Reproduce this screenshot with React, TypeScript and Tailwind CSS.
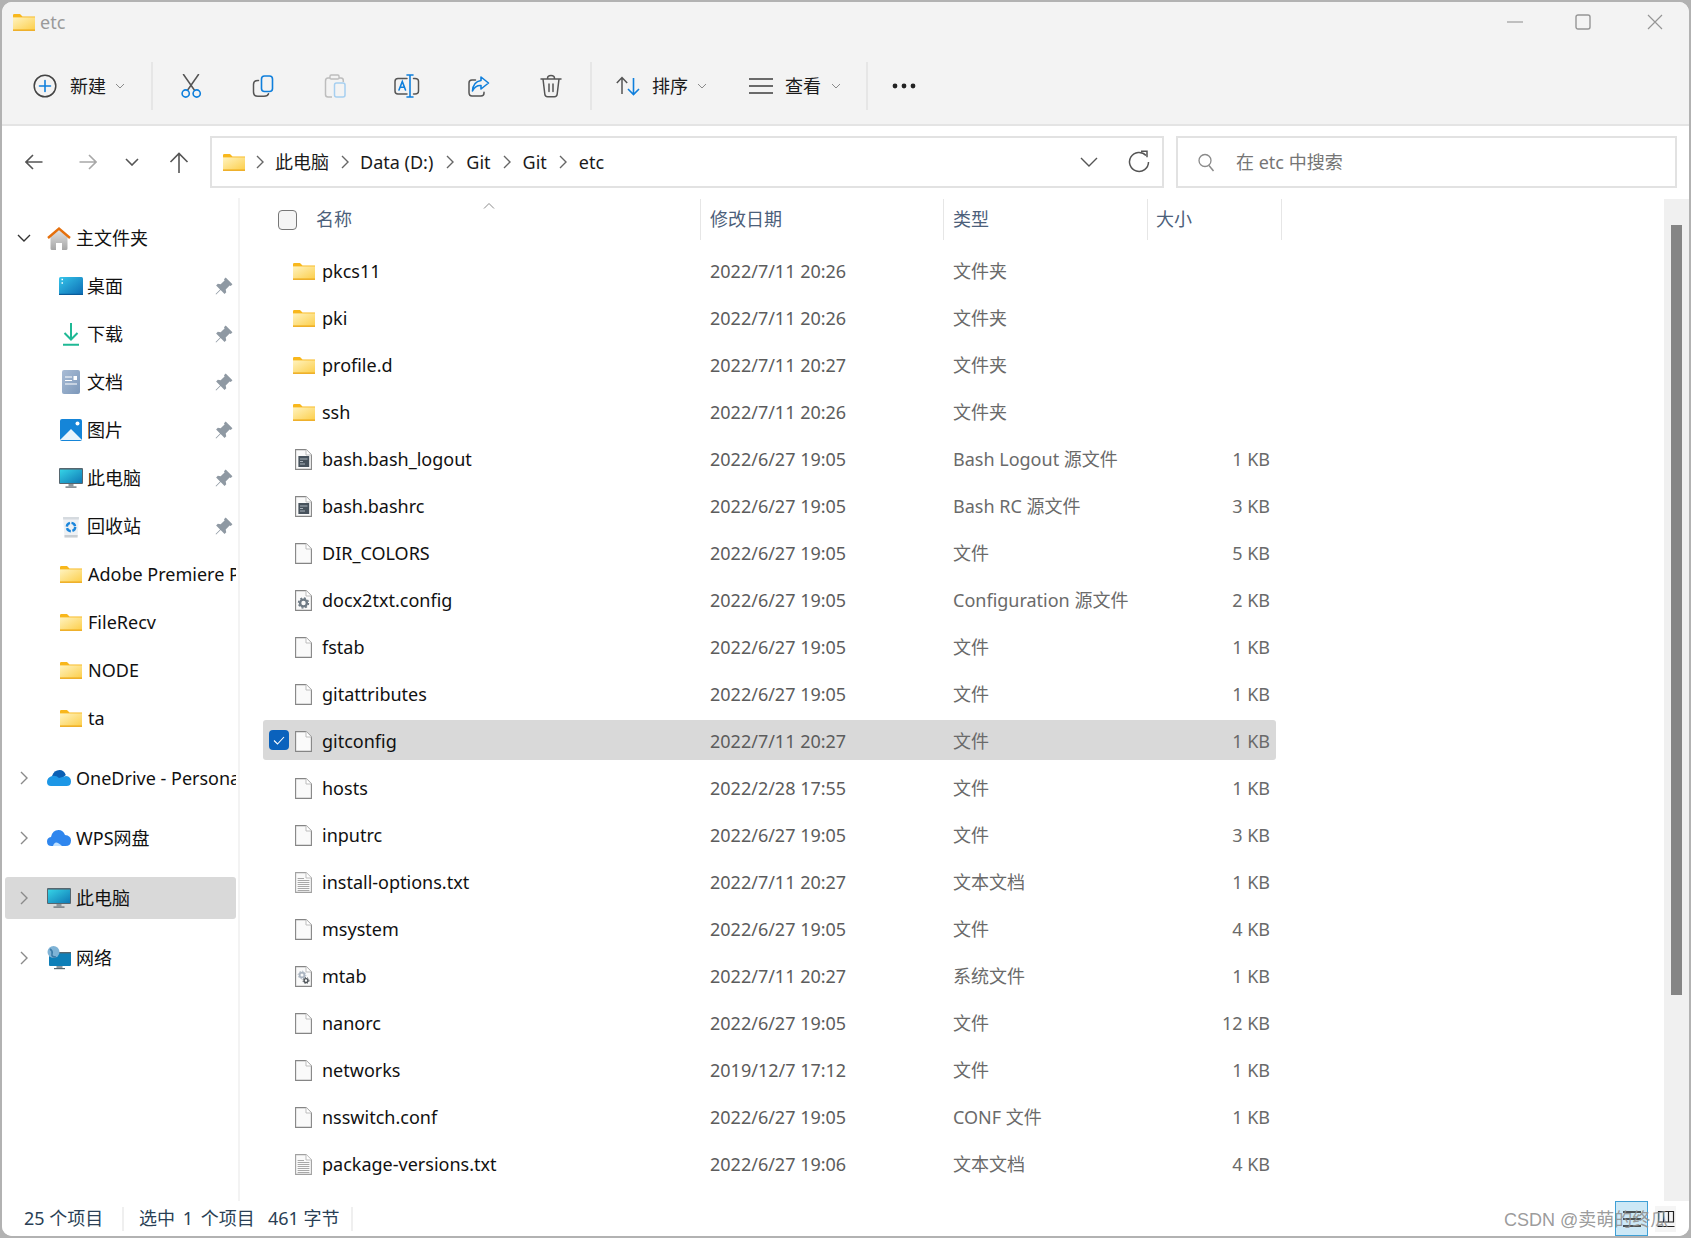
const gray = "#555555";
const blue = "#0f7fdc";

function Folder({ className = "" }: { className?: string }) {
  return (
    <svg width="22" height="17" viewBox="0 0 22 17" className={`shrink-0 ${className}`}>
      <defs>
        <linearGradient id="folderBody" x1="0" y1="0" x2="1" y2="1">
          <stop offset="0" stopColor="#fff3bf" />
          <stop offset="1" stopColor="#fccf4d" />
        </linearGradient>
      </defs>
      <path d="M0 1.2Q0 0 1.2 0H7L9.5 2.5H22V17H0Z" fill="#f8b71c" />
      <rect x="0" y="3.4" width="22" height="12.2" fill="url(#folderBody)" />
      <rect x="0" y="15.6" width="22" height="1.4" fill="#eeb02c" />
    </svg>
  );
}

type FileKind = "plain" | "bash" | "config" | "text" | "sys";

function FileIcon({ kind = "plain" }: { kind?: FileKind }) {
  return (
    <svg width="17" height="21" viewBox="0 0 17 21" className="shrink-0 ml-[2px] mr-[3px]">
      <path d="M.6.6H11L16.4 6V20.4H.6Z" fill="#fafafa" stroke={kind === "text" ? "#a0a0a0" : "#858585"} strokeWidth="1.1" />
      <path d="M11 .6V6H16.4" fill="#fff" stroke="#bdbdbd" strokeWidth="1" />
      {kind === "bash" && (
        <>
          <rect x="3.4" y="7" width="10.8" height="11" fill="#47525c" />
          <path d="M5 10H12.5M5 12.5H8M5 15H10" stroke="#a9b2ba" strokeWidth="1" />
        </>
      )}
      {kind === "config" && (
        <>
          <circle cx="8.5" cy="13" r="3.4" fill="none" stroke="#6e7a85" strokeWidth="2.4" />
          <circle cx="8.5" cy="13" r="5" fill="none" stroke="#6e7a85" strokeWidth="1.4" strokeDasharray="2 1.9" />
        </>
      )}
      {kind === "text" && (
        <path d="M2.6 6.5H9M2.6 8.5H14.4M2.6 10.5H14.4M2.6 12.5H14.4M2.6 14.5H14.4M2.6 16.5H14.4M2.6 18.5H14.4" stroke="#a8a8a8" strokeWidth="1" />
      )}
      {kind === "sys" && (
        <>
          <circle cx="7" cy="9" r="2.4" fill="none" stroke="#aab4c0" strokeWidth="1.8" />
          <circle cx="7" cy="9" r="3.8" fill="none" stroke="#aab4c0" strokeWidth="1" strokeDasharray="1.5 1.4" />
          <circle cx="11" cy="14.5" r="1.9" fill="none" stroke="#4d5358" strokeWidth="1.4" />
          <circle cx="11" cy="14.5" r="3" fill="none" stroke="#4d5358" strokeWidth="1" strokeDasharray="1.3 1.2" />
        </>
      )}
    </svg>
  );
}

function Chev({ open = false, color = "#8a8a8a" }: { open?: boolean; color?: string }) {
  return open ? (
    <svg width="14" height="8" viewBox="0 0 14 8">
      <path d="M1 1L7 7L13 1" fill="none" stroke="#333" strokeWidth="1.4" />
    </svg>
  ) : (
    <svg width="8" height="14" viewBox="0 0 8 14">
      <path d="M1 1L7 7L1 13" fill="none" stroke={color} strokeWidth="1.4" />
    </svg>
  );
}

function SmallDown() {
  return (
    <svg width="10" height="6" viewBox="0 0 10 6" className="shrink-0">
      <path d="M1 1L5 5L9 1" fill="none" stroke="#8a8a8a" strokeWidth="1" />
    </svg>
  );
}

function Sep() {
  return <div className="h-[48px] w-[2px] shrink-0 bg-[#e6e6e6]" />;
}

function IconSlot({ children }: { children: React.ReactNode }) {
  return <div className="flex h-[26px] w-[72px] shrink-0 items-center justify-center">{children}</div>;
}

function Toolbar() {
  const line = { fill: "none", stroke: gray, strokeWidth: 1.5, strokeLinecap: "round" as const };
  const accent = { fill: "none", stroke: blue, strokeWidth: 1.6, strokeLinecap: "round" as const };
  return (
    <div className="flex h-[84px] shrink-0 items-center border-b-2 border-[#e4e4e4] bg-[#f3f3f3] pl-[31px] pt-[6px] text-[18px] text-[#1a1a1a]">
      <svg width="24" height="24" viewBox="0 0 24 24" className="shrink-0">
        <circle cx="12" cy="12" r="10.8" fill="none" stroke="#444" strokeWidth="1.5" />
        <path d="M12 6.5V17.5M6.5 12H17.5" {...accent} />
      </svg>
      <span className="ml-[13px]">新建</span>
      <span className="ml-[9px]"><SmallDown /></span>
      <div className="ml-[26px]"><Sep /></div>
      <div className="ml-[2px] flex">
        <IconSlot>
          <svg width="24" height="24" viewBox="0 0 24 24">
            <path d="M4.5.5L15.5 16.2M19.5.5L8.5 16.2" {...line} />
            <circle cx="6.7" cy="19.5" r="3.6" {...accent} />
            <circle cx="17.7" cy="19.5" r="3.6" {...accent} />
          </svg>
        </IconSlot>
        <IconSlot>
          <svg width="24" height="24" viewBox="0 0 24 24">
            <rect x="10.5" y="2" width="11" height="15.5" rx="3" {...accent} />
            <path d="M7.5 6.5H7Q2.5 6.5 2.5 10.5V18Q2.5 22.3 7 22.3H13Q16.8 22.3 17.5 19.8" {...line} />
          </svg>
        </IconSlot>
        <IconSlot>
          <svg width="24" height="24" viewBox="0 0 24 24">
            <path d="M7 4H5Q2.5 4 2.5 7V20.5Q2.5 23 5 23H9M16 4H18Q20.3 4 20.3 6.5V8" fill="none" stroke="#bdbdbd" strokeWidth="1.5" />
            <rect x="7" y="1" width="9" height="4" rx="1.2" fill="none" stroke="#bdbdbd" strokeWidth="1.4" />
            <rect x="11.5" y="9" width="10.5" height="14" rx="2" fill="none" stroke="#a6cff0" strokeWidth="1.5" />
          </svg>
        </IconSlot>
        <IconSlot>
          <svg width="26" height="24" viewBox="0 0 26 24">
            <path d="M13 4.5H4Q1 4.5 1 7.5V17Q1 20 4 20H13M19.5 4.5H21Q24.5 4.5 24.5 7.5V17Q24.5 20 21 20H19.5" {...line} />
            <path d="M16 1V23M13 1H19M13 23H19" {...accent} />
            <path d="M5 16L8.3 7.5L11.5 16M6.2 13.2H10.4" {...accent} />
          </svg>
        </IconSlot>
        <IconSlot>
          <svg width="24" height="24" viewBox="0 0 24 24">
            <path d="M8.5 6H5Q2 6 2 9V18.5Q2 22 5 22H14Q17 22 17 19V18.2" {...line} />
            <path d="M14 3L21.5 9L14 15V11.5Q8.5 11 5.5 17Q6 7.8 14 6.5Z" fill="none" stroke={blue} strokeWidth="1.6" strokeLinejoin="round" />
          </svg>
        </IconSlot>
        <IconSlot>
          <svg width="22" height="24" viewBox="0 0 22 24">
            <path d="M1 5H21M7.5 4.5Q7.5 1.5 11 1.5Q14.5 1.5 14.5 4.5M3 5L4.8 20Q5 22.8 7.5 22.8H14.5Q17 22.8 17.2 20L19 5M9 10V17.5M13 10V17.5" {...line} />
          </svg>
        </IconSlot>
      </div>
      <div className="ml-[3px]"><Sep /></div>
      <svg width="24" height="20" viewBox="0 0 24 20" className="ml-[24px] shrink-0">
        <path d="M6 18V1.5M.8 7L6 1.5L11.2 7" fill="none" stroke={gray} strokeWidth="1.5" />
        <path d="M17.5 2V18.5M12 13L17.5 18.5L23 13" fill="none" stroke={blue} strokeWidth="1.6" />
      </svg>
      <span className="ml-[12px]">排序</span>
      <span className="ml-[9px]"><SmallDown /></span>
      <svg width="24" height="18" viewBox="0 0 24 18" className="ml-[42px] shrink-0">
        <path d="M0 2H24M0 9H24M0 16H24" stroke="#6a6a6a" strokeWidth="1.8" />
      </svg>
      <span className="ml-[12px]">查看</span>
      <span className="ml-[10px]"><SmallDown /></span>
      <div className="ml-[25px]"><Sep /></div>
      <svg width="24" height="6" viewBox="0 0 24 6" className="ml-[24px] shrink-0">
        <circle cx="3" cy="3" r="2.4" fill="#222" />
        <circle cx="12" cy="3" r="2.4" fill="#222" />
        <circle cx="21" cy="3" r="2.4" fill="#222" />
      </svg>
    </div>
  );
}

const crumbs = [
  { label: "Data (D:)", gap: "w-[31px]" },
  { label: "Git", gap: "w-[33px]" },
  { label: "Git", gap: "w-[32px]" },
  { label: "etc", gap: "w-[32px]" },
];

function AddressRow() {
  return (
    <div className="flex h-[72px] shrink-0 items-start bg-white pt-[10px] text-[18px]">
      <div className="flex h-[52px] w-[208px] shrink-0 items-center">
        <div className="ml-[5px] flex w-[54px] justify-center">
          <svg width="18" height="16" viewBox="0 0 18 16">
            <path d="M1 8H17.5M8 1L1 8L8 15" fill="none" stroke={gray} strokeWidth="1.6" />
          </svg>
        </div>
        <div className="flex w-[54px] justify-center">
          <svg width="18" height="16" viewBox="0 0 18 16">
            <path d="M.5 8H17M10 1L17 8L10 15" fill="none" stroke="#a8a8a8" strokeWidth="1.6" />
          </svg>
        </div>
        <div className="flex w-[34px] justify-center">
          <svg width="14" height="8" viewBox="0 0 14 8">
            <path d="M1 1L7 7L13 1" fill="none" stroke={gray} strokeWidth="1.6" />
          </svg>
        </div>
        <div className="flex w-[60px] justify-center">
          <svg width="20" height="21" viewBox="0 0 20 21">
            <path d="M10 21V2M1.5 10L10 1.5L18.5 10" fill="none" stroke={gray} strokeWidth="1.6" />
          </svg>
        </div>
      </div>
      <div className="flex h-[52px] w-[954px] shrink-0 items-center border-2 border-[#e2e2e2] pl-[11px] pr-[12px] text-[#1a1a1a]">
        <Folder />
        <div className="flex w-[30px] justify-center"><Chev color="#666" /></div>
        <span>此电脑</span>
        {crumbs.map((c, i) => (
          <span key={i} className="flex items-center">
            <span className={`flex ${c.gap} justify-center`}><Chev color="#666" /></span>
            {c.label}
          </span>
        ))}
        <svg width="18" height="10" viewBox="0 0 18 10" className="ml-auto mr-[30px]">
          <path d="M1 1L9 9L17 1" fill="none" stroke={gray} strokeWidth="1.4" />
        </svg>
        <svg width="22" height="24" viewBox="0 0 22 24">
          <path d="M18 5.5A9.5 9.5 0 1 0 20.5 12" fill="none" stroke={gray} strokeWidth="1.5" />
          <path d="M13 1.2H19V7.2" fill="none" stroke={gray} strokeWidth="1.5" />
        </svg>
      </div>
      <div className="ml-[12px] flex h-[52px] w-[501px] shrink-0 items-center border-2 border-[#e2e2e2] pl-[19px] text-[#757575]">
        <svg width="18" height="19" viewBox="0 0 18 19" className="shrink-0">
          <circle cx="8" cy="7.5" r="6" fill="none" stroke="#8a8a8a" strokeWidth="1.3" />
          <path d="M12 12.5L16.5 18" stroke="#8a8a8a" strokeWidth="1.5" />
        </svg>
        <span className="ml-[21px]">在 etc 中搜索</span>
      </div>
    </div>
  );
}

function Pin() {
  return (
    <svg width="18" height="18" viewBox="0 0 16 16" className="mr-[5px] shrink-0">
      <path d="M9.5.5L15.5 6.5L14 8L13 7.5L9.5 11L10 13.5L8.5 15L5 11.5L1 15.5L.5 15L4.5 11L1 7.5L2.5 6L5 6.5L8.5 3L8 2Z" fill="#8f99a3" />
    </svg>
  );
}

function Monitor() {
  return (
    <svg width="24" height="20" viewBox="0 0 24 20" className="shrink-0">
      <defs>
        <linearGradient id="screenFill" x1="0" y1="0" x2="1" y2="1">
          <stop offset="0" stopColor="#35d3e6" />
          <stop offset="1" stopColor="#0f78b5" />
        </linearGradient>
      </defs>
      <rect x="0" y="0" width="24" height="16" rx="1" fill="#56666f" />
      <rect x="1" y="1.6" width="22" height="13.4" fill="url(#screenFill)" />
      <rect x="9.5" y="16" width="5" height="2.4" fill="#8e979d" />
      <rect x="6.5" y="18.4" width="11" height="1.4" fill="#6d777e" />
    </svg>
  );
}

const quickIcons: Record<string, React.ReactNode> = {
  桌面: (
    <svg width="24" height="18" viewBox="0 0 24 18" className="shrink-0">
      <defs>
        <linearGradient id="deskFill" x1="0" y1="0" x2="1" y2="1">
          <stop offset="0" stopColor="#35c5ea" />
          <stop offset="1" stopColor="#0c6bb3" />
        </linearGradient>
      </defs>
      <rect width="24" height="18" rx="1.5" fill="url(#deskFill)" />
      <path d="M2.5 2.5H4M2.5 6H4" stroke="#fff" strokeWidth="1.5" />
      <rect x="0" y="16.8" width="24" height="1.2" fill="#0a5c9a" />
    </svg>
  ),
  下载: (
    <svg width="16" height="23" viewBox="0 0 16 23" className="mx-[3px] shrink-0">
      <path d="M8 0V16.5M1.5 10L8 16.5L14.5 10M0 21.8H16" fill="none" stroke="#1fb995" strokeWidth="2" />
    </svg>
  ),
  文档: (
    <svg width="18" height="24" viewBox="0 0 18 24" className="mx-[2px] shrink-0">
      <defs>
        <linearGradient id="docFill" x1="0" y1="0" x2="1" y2="1">
          <stop offset="0" stopColor="#a9bcd5" />
          <stop offset="1" stopColor="#7c98ba" />
        </linearGradient>
      </defs>
      <rect width="18" height="24" rx="2" fill="url(#docFill)" />
      <path d="M3 7H10M3 10.5H10M3 14H15" stroke="#fff" strokeWidth="1.2" />
      <rect x="11.5" y="6" width="3.5" height="4" fill="#fff" />
    </svg>
  ),
  图片: (
    <svg width="22" height="22" viewBox="0 0 22 22" className="shrink-0">
      <rect width="22" height="22" rx="2" fill="#1585d8" />
      <path d="M0 21L11 10L22 21Z" fill="#eaf5fc" />
      <circle cx="17.5" cy="4.5" r="2" fill="#fff" />
    </svg>
  ),
  此电脑: <Monitor />,
  回收站: (
    <svg width="18" height="23" viewBox="0 0 18 23" className="mx-[2px] shrink-0">
      <path d="M1 2H17L15.5 22.5H2.5Z" fill="#eef1f4" />
      <path d="M1 2H17L16.8 4.5H1.2Z" fill="#d5dadf" />
      <path d="M2.5 20H15.7L15.5 22.5H2.5Z" fill="#c9ced3" />
      <circle cx="9" cy="12" r="4.2" fill="none" stroke="#1b86dc" strokeWidth="2.4" strokeDasharray="5 1.6" />
    </svg>
  ),
};

const pinned = ["桌面", "下载", "文档", "图片", "此电脑", "回收站"];
const folders = ["Adobe Premiere Pro", "FileRecv", "NODE", "ta"];

function TopRow({ icon, label, active }: { icon: React.ReactNode; label: string; active?: boolean }) {
  return (
    <div className="flex h-[60px] items-center">
      <div className={`ml-[3px] mr-[2px] flex h-[42px] flex-1 items-center overflow-hidden whitespace-nowrap rounded-[3px] ${active ? "bg-[#d9d9d9]" : ""}`}>
        <div className="flex w-[38px] shrink-0 justify-center"><Chev /></div>
        <div className="ml-[4px] flex w-[24px] shrink-0 justify-center">{icon}</div>
        <span className="ml-[5px]">{label}</span>
      </div>
    </div>
  );
}

function Sidebar() {
  return (
    <div className="box-content w-[236px] shrink-0 overflow-hidden border-r-2 border-[#f3f3f3] pt-[16px] text-[18px] text-[#111]">
      <div className="ml-[3px] flex h-[48px] items-center whitespace-nowrap">
        <div className="flex w-[38px] shrink-0 justify-center"><Chev open /></div>
        <svg width="24" height="23" viewBox="0 0 24 23" className="ml-[4px] shrink-0">
          <defs>
            <linearGradient id="homeFill" x1="0" y1="0" x2="0" y2="1">
              <stop offset="0" stopColor="#e4e4e4" />
              <stop offset="1" stopColor="#a6a6a6" />
            </linearGradient>
          </defs>
          <path d="M12 2L20.5 10V21.5Q20.5 23 19 23H15V16H9V23H5Q3.5 23 3.5 21.5V10Z" fill="url(#homeFill)" />
          <path d="M1 11L12 1.6L23 11" fill="none" stroke="#e5700d" strokeWidth="2.4" />
        </svg>
        <span className="ml-[5px]">主文件夹</span>
      </div>
      {pinned.map((name) => (
        <div key={name} className="ml-[57px] flex h-[48px] items-center whitespace-nowrap">
          <div className="flex w-[24px] shrink-0 justify-center">{quickIcons[name]}</div>
          <span className="ml-[4px] flex-1">{name}</span>
          <Pin />
        </div>
      ))}
      {folders.map((name) => (
        <div key={name} className="ml-[58px] mr-[2px] flex h-[48px] items-center overflow-hidden whitespace-nowrap">
          <Folder />
          <span className="ml-[6px]">{name}</span>
        </div>
      ))}
      <div className="mt-[6px]">
        <TopRow
          label="OneDrive - Personal"
          icon={
            <svg width="24" height="16" viewBox="0 0 24 16">
              <path d="M5 6Q7 0 12.5 0Q17 0 18.8 5L11 12Z" fill="#0a5fb4" />
              <path d="M4 16Q0 16 0 12Q0 7.5 5 6Q9 5 12 8L19 6Q24 6.5 24 11.5Q24 16 19.5 16Z" fill="#1d97e6" />
            </svg>
          }
        />
        <TopRow
          label="WPS网盘"
          icon={
            <svg width="24" height="16" viewBox="0 0 24 16">
              <path d="M4.5 16Q0 16 0 11.5Q0 7.5 4 7Q5.5 0 11.5 0Q16 0 18 5Q24 5.5 24 10.5Q24 16 18.5 16Z" fill="#2f86ee" />
              <path d="M6 16Q8 9 15 16" fill="#bfe0ff" />
            </svg>
          }
        />
        <TopRow label="此电脑" active icon={<Monitor />} />
        <TopRow
          label="网络"
          icon={
            <svg width="24" height="24" viewBox="0 0 24 24">
              <rect x="2" y="6" width="22" height="14" rx="1" fill="#0f7fb8" />
              <rect x="2" y="6" width="22" height="1.4" fill="#56666f" />
              <rect x="9.5" y="20" width="6" height="2" fill="#8e979d" />
              <rect x="7" y="22" width="11" height="1.2" fill="#56666f" />
              <circle cx="6.5" cy="6" r="6" fill="#7fb3d6" />
              <path d="M3 3Q6 5 5 8T9 11" fill="none" stroke="#3c7ba8" strokeWidth="1.6" />
            </svg>
          }
        />
      </div>
    </div>
  );
}

type Row = { name: string; date: string; type: string; size?: string; kind?: FileKind; folder?: boolean; selected?: boolean };

const rows: Row[] = [
  { name: "pkcs11", date: "2022/7/11 20:26", type: "文件夹", folder: true },
  { name: "pki", date: "2022/7/11 20:26", type: "文件夹", folder: true },
  { name: "profile.d", date: "2022/7/11 20:27", type: "文件夹", folder: true },
  { name: "ssh", date: "2022/7/11 20:26", type: "文件夹", folder: true },
  { name: "bash.bash_logout", date: "2022/6/27 19:05", type: "Bash Logout 源文件", size: "1 KB", kind: "bash" },
  { name: "bash.bashrc", date: "2022/6/27 19:05", type: "Bash RC 源文件", size: "3 KB", kind: "bash" },
  { name: "DIR_COLORS", date: "2022/6/27 19:05", type: "文件", size: "5 KB" },
  { name: "docx2txt.config", date: "2022/6/27 19:05", type: "Configuration 源文件", size: "2 KB", kind: "config" },
  { name: "fstab", date: "2022/6/27 19:05", type: "文件", size: "1 KB" },
  { name: "gitattributes", date: "2022/6/27 19:05", type: "文件", size: "1 KB" },
  { name: "gitconfig", date: "2022/7/11 20:27", type: "文件", size: "1 KB", selected: true },
  { name: "hosts", date: "2022/2/28 17:55", type: "文件", size: "1 KB" },
  { name: "inputrc", date: "2022/6/27 19:05", type: "文件", size: "3 KB" },
  { name: "install-options.txt", date: "2022/7/11 20:27", type: "文本文档", size: "1 KB", kind: "text" },
  { name: "msystem", date: "2022/6/27 19:05", type: "文件", size: "4 KB" },
  { name: "mtab", date: "2022/7/11 20:27", type: "系统文件", size: "1 KB", kind: "sys" },
  { name: "nanorc", date: "2022/6/27 19:05", type: "文件", size: "12 KB" },
  { name: "networks", date: "2019/12/7 17:12", type: "文件", size: "1 KB" },
  { name: "nsswitch.conf", date: "2022/6/27 19:05", type: "CONF 文件", size: "1 KB" },
  { name: "package-versions.txt", date: "2022/6/27 19:06", type: "文本文档", size: "4 KB", kind: "text" },
  { name: "", date: "", type: "" },
];

function FileRow({ row }: { row: Row }) {
  return (
    <div className="ml-[23px] h-[47px] w-[1013px] pb-[5px] pt-[2px]">
      <div className={`relative flex h-[40px] items-center rounded-[3px] pt-[3px] ${row.selected ? "bg-[#d9d9d9]" : ""}`}>
        {row.selected && (
          <div className="absolute left-[6px] top-[10px] flex h-[20px] w-[20px] items-center justify-center rounded-[4px] bg-[#0a62bd]">
            <svg width="12" height="9" viewBox="0 0 12 9">
              <path d="M1 4.5L4.5 8L11 1" fill="none" stroke="#fff" strokeWidth="1.1" />
            </svg>
          </div>
        )}
        <div className="flex w-[447px] shrink-0 items-center pl-[30px]">
          {row.folder ? <Folder /> : <FileIcon kind={row.kind} />}
          <span className="ml-[7px] text-[#111]">{row.name}</span>
        </div>
        <span className="w-[243px] shrink-0 text-[#5c5c5c]">{row.date}</span>
        <span className="w-[150px] shrink-0 whitespace-nowrap text-[#6a6a6a]">{row.type}</span>
        <span className="w-[167px] shrink-0 text-right text-[#6a6a6a]">{row.size}</span>
      </div>
    </div>
  );
}

function FileList() {
  return (
    <div className="relative w-[1424px] shrink-0 overflow-hidden text-[18px]">
      <svg width="12" height="6" viewBox="0 0 12 6" className="absolute left-[243px] top-[5px]">
        <path d="M1 5.5L6 .5L11 5.5" fill="none" stroke="#8a8a8a" strokeWidth="1" />
      </svg>
      <div className="flex h-[42px] items-stretch pt-[1px] text-[#4c607a]">
        <div className="flex w-[461px] shrink-0 items-center border-r border-[#e6e6e6] pl-[38px]">
          <div className="h-[20px] w-[19px] rounded-[4px] border border-[#777] bg-[#f5f5f5]" />
          <span className="ml-[19px]">名称</span>
        </div>
        <div className="flex w-[243px] shrink-0 items-center border-r border-[#e6e6e6] pl-[9px]">修改日期</div>
        <div className="flex w-[204px] shrink-0 items-center border-r border-[#e6e6e6] pl-[9px]">类型</div>
        <div className="flex w-[134px] shrink-0 items-center border-r border-[#e6e6e6] pl-[8px]">大小</div>
      </div>
      <div className="pt-[8px]">
        {rows.map((r, i) => (
          <FileRow key={i} row={r} />
        ))}
      </div>
    </div>
  );
}

function StatusBar() {
  return (
    <div className="relative flex h-[35px] shrink-0 items-center bg-white pl-[22px] text-[18px] text-[#2a3f55]">
      <span className="w-[80px] shrink-0 whitespace-nowrap">25 个项目</span>
      <div className="ml-[18px] h-[24px] w-[2px] shrink-0 bg-[#efefef]" />
      <span className="ml-[15px] w-[121px] shrink-0 whitespace-nowrap [word-spacing:3px]">选中 1 个项目</span>
      <span className="ml-[8px] w-[66px] shrink-0 whitespace-nowrap">461 字节</span>
      <div className="ml-[17px] h-[24px] w-[2px] shrink-0 bg-[#efefef]" />
      <div className="ml-auto mr-[7px] flex h-[35px] w-[33px] items-center justify-center border border-[#3fa0d6] bg-[#cce8f6]">
        <svg width="20" height="18" viewBox="0 0 20 18">
          <path d="M1 2H19M1 9H19M1 16H19" stroke="#222" strokeWidth="1.3" />
        </svg>
      </div>
      <div className="mr-[13px] flex h-[26px] w-[21px] items-center justify-center bg-[#f5f5f5]">
        <svg width="18" height="18" viewBox="0 0 18 18">
          <path d="M1.5 1.5H16.5V12H1.5ZM6.5 1.5V12M11.5 1.5V12M.5 16.5H17.5" fill="none" stroke="#222" strokeWidth="1.2" />
        </svg>
      </div>
      <span className="absolute left-[1502px] top-[6px] whitespace-nowrap font-['Liberation_Sans','Noto_Sans_CJK_SC',sans-serif] text-[18px] text-[#8f8f8f]/90">
        CSDN @卖萌的终瓜
      </span>
    </div>
  );
}

export default function App() {
  return (
    <div className="h-[1238px] w-[1691px] overflow-hidden bg-[#b2b2b2] pl-[2px] pt-[2px] font-['Noto_Sans','Noto_Sans_CJK_SC',sans-serif]">
      <div className="flex h-[1234px] w-[1687px] flex-col overflow-hidden rounded-[10px] bg-white">
        <div className="flex h-[40px] shrink-0 items-center bg-[#f3f3f3] pl-[11px]">
          <Folder />
          <span className="ml-[5px] text-[18px] text-[#9a9a9a]">etc</span>
          <svg width="16" height="2" viewBox="0 0 16 2" className="ml-auto">
            <path d="M0 1H16" stroke="#8c8c8c" strokeWidth="1.2" />
          </svg>
          <svg width="16" height="16" viewBox="0 0 16 16" className="ml-[52px]">
            <rect x="1" y="1" width="14" height="14" rx="2" fill="none" stroke="#959595" strokeWidth="1.4" />
          </svg>
          <svg width="16" height="16" viewBox="0 0 16 16" className="ml-[56px] mr-[26px]">
            <path d="M1 1L15 15M15 1L1 15" stroke="#959595" strokeWidth="1.2" />
          </svg>
        </div>
        <Toolbar />
        <AddressRow />
        <div className="flex h-[1003px] shrink-0">
          <Sidebar />
          <FileList />
          <div className="mt-[1px] h-[1002px] w-[25px] shrink-0 bg-[#f0f0f0] pl-[7px] pt-[26px]">
            <div className="h-[770px] w-[11px] bg-[#858585]" />
          </div>
        </div>
        <StatusBar />
      </div>
    </div>
  );
}
